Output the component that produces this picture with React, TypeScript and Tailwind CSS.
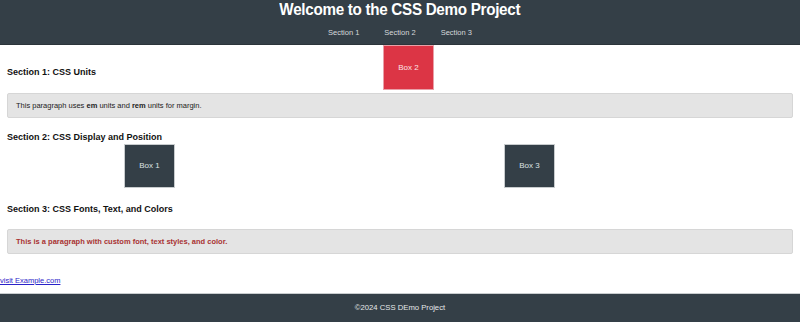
import React from 'react';

const App: React.FC = () => {
  return (
    <div className="relative w-[800px] h-[322px] bg-white font-['Liberation_Sans',Arial,sans-serif] text-black overflow-hidden">
      {/* Header */}
      <header className="h-[45px] bg-[#343f47] border-b border-[#2b343a] flex flex-col items-center">
        <h1 className="text-[16px] leading-[18px] font-bold text-white mt-[1px] tracking-[-0.3px] scale-x-[0.95]">Welcome to the CSS Demo Project</h1>
        <nav className="flex gap-[25px] mt-[9px] text-[7.5px] leading-[10px] text-[#d5d9dc]">
          <span>Section 1</span>
          <span>Section 2</span>
          <span>Section 3</span>
        </nav>
      </header>

      {/* Floating box */}
      <div className="absolute left-[383px] top-[45px] w-[51px] h-[45px] bg-[#dc3545] border border-[#e9a0a8] flex items-center justify-center text-[8px] text-[#fbe3e5]">
        Box 2
      </div>

      <main className="px-[7px]">
        <h2 className="text-[9px] leading-[12px] font-bold mt-[21px] text-[#111]">Section 1: CSS Units</h2>
        <p className="mt-[15px] h-[25px] flex items-center px-[8px] bg-[#e4e4e4] border border-[#d6d6d6] rounded-[2px] text-[7.5px] text-[#222]">
          This paragraph uses&nbsp;<strong>em</strong>&nbsp;units and&nbsp;<strong>rem</strong>&nbsp;units for margin.
        </p>

        <h2 className="text-[9px] leading-[12px] font-bold mt-[13px] text-[#111]">Section 2: CSS Display and Position</h2>
        <div className="flex mt-[1px]">
          <div className="ml-[117px] w-[51px] h-[44px] bg-[#343f47] border border-[#c8ccce] flex items-center justify-center text-[8px] text-[#dde1e3]">
            Box 1
          </div>
          <div className="ml-[329px] w-[51px] h-[44px] bg-[#343f47] border border-[#c8ccce] flex items-center justify-center text-[8px] text-[#dde1e3]">
            Box 3
          </div>
        </div>

        <h2 className="text-[9px] leading-[12px] font-bold mt-[15px] text-[#111]">Section 3: CSS Fonts, Text, and Colors</h2>
        <p className="mt-[14px] h-[25px] flex items-center px-[8px] bg-[#e4e4e4] border border-[#d6d6d6] rounded-[2px] text-[7.5px] font-bold text-[#a83232]">
          This is a paragraph with custom font, text styles, and color.
        </p>
      </main>

      <a href="#" className="block mt-[22px] text-[7.5px] leading-[10px] text-[#2a22c8] underline">visit Example.com</a>

      <footer className="absolute left-0 right-0 top-[293px] bottom-0 bg-[#343f47] border-t border-[#c9cdcf] flex items-center justify-center text-[7.7px] text-[#e6e8ea]">
        ©2024 CSS DEmo Project
      </footer>
    </div>
  );
};

export default App;
